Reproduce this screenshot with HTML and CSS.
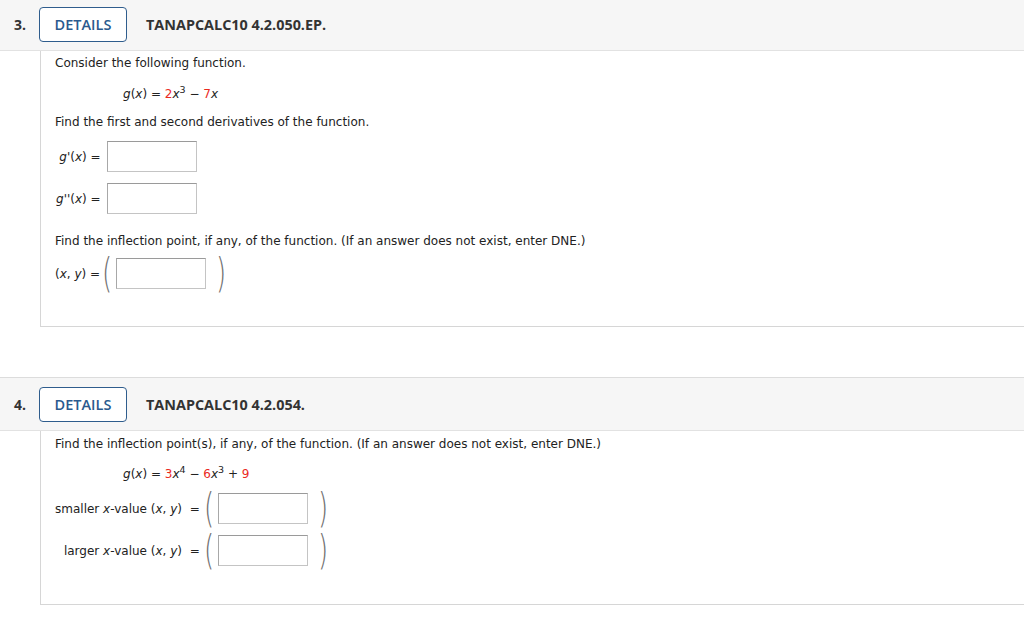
FILE: index.html
```html
<!DOCTYPE html>
<html lang="en">
<head>
  <meta charset="UTF-8">
  <meta name="viewport" content="width=device-width, initial-scale=1.0">
  <title>Assignment Questions</title>
  <link rel="stylesheet" href="styles.css">
</head>
<body>

  <!-- Question 3 -->
  <div class="question first">
    <div class="q-header">
      <span class="q-num">3.</span>
      <button class="details">DETAILS</button>
      <span class="q-title">TANAPCALC10 4.2.050.EP.</span>
    </div>
    <div class="q-body q3">
      <p class="text">Consider the following function.</p>
      <p class="formula"><i>g</i>(<i>x</i>) = <span class="red">2</span><i>x</i><sup>3</sup> &minus; <span class="red">7</span><i>x</i></p>
      <p class="text t2">Find the first and second derivatives of the function.</p>
      <table class="answers a1">
        <tr>
          <td class="lbl"><i>g</i>'(<i>x</i>) =</td>
          <td><input type="text" class="box"></td>
        </tr>
        <tr>
          <td class="lbl"><i>g</i>''(<i>x</i>) =</td>
          <td><input type="text" class="box"></td>
        </tr>
      </table>
      <p class="text t3">Find the inflection point, if any, of the function. (If an answer does not exist, enter DNE.)</p>
      <div class="point-row">
        <span class="lbl">(<i>x</i>, <i>y</i>) =</span>
        <span class="paren open">(</span>
        <input type="text" class="box">
        <span class="paren close">)</span>
      </div>
    </div>
  </div>

  <!-- Question 4 -->
  <div class="question">
    <div class="q-header">
      <span class="q-num">4.</span>
      <button class="details">DETAILS</button>
      <span class="q-title">TANAPCALC10 4.2.054.</span>
    </div>
    <div class="q-body q4">
      <p class="text">Find the inflection point(s), if any, of the function. (If an answer does not exist, enter DNE.)</p>
      <p class="formula"><i>g</i>(<i>x</i>) = <span class="red">3</span><i>x</i><sup>4</sup> &minus; <span class="red">6</span><i>x</i><sup>3</sup> + <span class="red">9</span></p>
      <table class="answers a2">
        <tr>
          <td class="lbl">smaller <i>x</i>-value (<i>x</i>, <i>y</i>) &nbsp;=</td>
          <td class="pt"><span class="paren open">(</span><input type="text" class="box"><span class="paren close">)</span></td>
        </tr>
        <tr>
          <td class="lbl">larger <i>x</i>-value (<i>x</i>, <i>y</i>) &nbsp;=</td>
          <td class="pt"><span class="paren open">(</span><input type="text" class="box"><span class="paren close">)</span></td>
        </tr>
      </table>
    </div>
  </div>

</body>
</html>
```

FILE: styles.css
```css
body {
  margin: 0;
  background: #fff;
  color: #222;
  font-family: "DejaVu Sans", Verdana, sans-serif;
  font-size: 12px;
}

.question {
  margin-bottom: 50px;
}

.question:last-child {
  margin-bottom: 0;
}

.question.first {
  margin-top: -3px;
}

.q-header {
  display: flex;
  align-items: center;
  height: 52px;
  background: #f6f6f6;
  border-top: 1px solid #dcdcdc;
  border-bottom: 1px solid #e2e2e2;
  font-family: "Open Sans", sans-serif;
}

.q-num {
  width: 25px;
  padding-left: 14px;
  font-weight: 700;
  font-size: 14px;
  color: #333;
}

.details {
  width: 88px;
  height: 35px;
  padding: 0;
  background: #fff;
  border: 1.5px solid #2f5d8d;
  border-radius: 4px;
  color: #2a5a8e;
  font-family: "Open Sans", sans-serif;
  font-weight: 600;
  font-size: 14.5px;
}

.q-title {
  margin-left: 19px;
  font-weight: 700;
  font-size: 14.4px;
  color: #333;
}

.q-body {
  margin-left: 40px;
  border-left: 1px solid #d6d6d6;
  border-bottom: 1px solid #d6d6d6;
  padding: 4px 0 37px 14px;
}

.q4 {
  padding-top: 5px;
  padding-bottom: 38px;
}

p {
  margin: 0;
}

.text {
  line-height: 16px;
}

.formula {
  margin: 15px 0 0 68px;
  line-height: 16px;
  font-size: 12px;
}

.q4 .formula {
  margin-top: 14px;
}

.formula sup {
  font-size: 9.5px;
  line-height: 0;
}

.red {
  color: #ea2a1e;
}

.t2 {
  margin-top: 12px;
}

.answers {
  border-collapse: collapse;
  margin-top: 11px;
}

.answers td {
  padding: 0 0 11px 0;
}

.answers tr:last-child td {
  padding-bottom: 0;
}

.answers .lbl {
  text-align: right;
  padding-right: 2px;
  white-space: nowrap;
}

.a1 .lbl {
  padding-left: 1px;
  padding-right: 6px;
}

.box {
  display: block;
  box-sizing: border-box;
  width: 90px;
  height: 31px;
  margin: 0;
  border: 1px solid #c4c4c4;
  border-top-color: #9a9a9a;
  border-left-color: #a8a8a8;
  background: #fff;
}

.t3 {
  margin-top: 19px;
}

.point-row {
  display: flex;
  align-items: center;
  height: 31px;
  margin-top: 9px;
}

.pt {
  display: flex;
  align-items: center;
  height: 31px;
}

.paren {
  display: inline-block;
  width: 12px;
  text-align: center;
  font-family: "DejaVu Sans", sans-serif;
  font-weight: 200;
  font-size: 40px;
  line-height: 31px;
  color: #6f6f6f;
  transform: scaleX(0.65);
}

.paren.open {
  margin-right: 4px;
}

.paren.close {
  margin-left: 8px;
}
```
